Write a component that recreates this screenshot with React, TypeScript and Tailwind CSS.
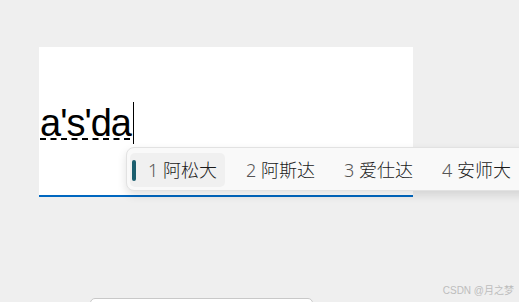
const candidates = [
  { n: "1", text: "阿松大" },
  { n: "2", text: "阿斯达" },
  { n: "3", text: "爱仕达" },
  { n: "4", text: "安师大" },
];

export default function App() {
  return (
    <main className="relative h-[302px] w-[519px] overflow-hidden bg-[#efefef] pl-[39px] pt-[47px]">
      {/* text box */}
      <div className="h-[150px] w-[374px] border-b-2 border-[#0067c0] bg-white pl-[1px] pt-[55px]">
        <div className="flex items-stretch">
          <span
            className="text-[38px] leading-[42px] tracking-[-1px] text-black underline decoration-dashed decoration-[1.5px] underline-offset-[2px]"
            style={{ fontFamily: '"Liberation Sans", Arial, sans-serif' }}
          >
            a's'da
          </span>
          <span className="ml-[2px] h-[42px] w-px bg-black" />
        </div>
      </div>

      {/* next field, cut off at the bottom */}
      <div className="ml-[51px] mt-[101px] h-[20px] w-[223px] rounded-[5px] border border-[#c8c8c8] bg-white" />

      {/* IME candidate window */}
      <div className="absolute left-[126px] top-[147px] h-[44px] w-[420px] rounded-[8px] border border-[#e2e2e2] bg-[#f9f9f9] px-[3px] pb-[3px] pt-[5px] shadow-[0_4px_10px_rgba(0,0,0,0.12)]">
        <div className="flex gap-[3px]">
          {candidates.map((c, i) => (
            <div
              key={c.n}
              className={
                i === 0
                  ? "flex h-[34px] w-[95px] items-center rounded-[5px] bg-[#f0f0f0]"
                  : "flex h-[34px] w-[95px] items-center rounded-[5px]"
              }
            >
              {i === 0 ? (
                <span className="ml-[2px] mr-[12px] h-[21px] w-[4px] rounded-full bg-[#1b5e6e]" />
              ) : (
                <span className="w-[18px]" />
              )}
              <span
                className="whitespace-nowrap text-[18px] font-light leading-none"
                style={{ fontFamily: '"Noto Sans", "Noto Sans CJK SC", sans-serif' }}
              >
                <span className="text-[#555]">{c.n} </span>
                <span className="text-[#1a1a1a]">{c.text}</span>
              </span>
            </div>
          ))}
        </div>
      </div>

      <div
        className="absolute right-[5px] top-[286px] text-[10px] leading-none text-[#bdbdbd]"
        style={{ fontFamily: '"Liberation Sans", "Noto Sans CJK SC", sans-serif' }}
      >
        CSDN @月之梦
      </div>
    </main>
  );
}
